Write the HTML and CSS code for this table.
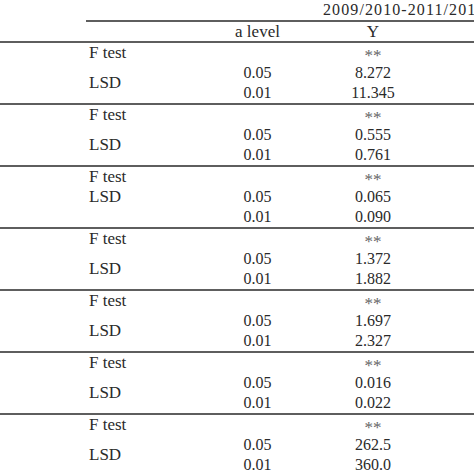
FILE: index.html
```html
<!DOCTYPE html>
<html>
<head>
<meta charset="utf-8">
<link rel="stylesheet" href="styles.css">
</head>
<body>
<div class="sheet">
  <div class="head1"><span class="period">2009/2010-2011/2012</span></div>
  <div class="head2">
    <div></div>
    <div></div>
    <div class="c3 lbl">a level</div>
    <div class="c4 lbl">Y</div>
  </div>

  <div class="group">
    <div class="lab r1">F test</div>
    <div class="c4 r1 star">**</div>
    <div class="lab r23">LSD</div>
    <div class="c3 r2">0.05</div><div class="c4 r2">8.272</div>
    <div class="c3 r3">0.01</div><div class="c4 r3">11.345</div>
  </div>

  <div class="group">
    <div class="lab r1">F test</div>
    <div class="c4 r1 star">**</div>
    <div class="lab r23">LSD</div>
    <div class="c3 r2">0.05</div><div class="c4 r2">0.555</div>
    <div class="c3 r3">0.01</div><div class="c4 r3">0.761</div>
  </div>

  <div class="group">
    <div class="lab r1">F test</div>
    <div class="c4 r1 star">**</div>
    <div class="lab r2">LSD</div>
    <div class="c3 r2">0.05</div><div class="c4 r2">0.065</div>
    <div class="c3 r3">0.01</div><div class="c4 r3">0.090</div>
  </div>

  <div class="group">
    <div class="lab r1">F test</div>
    <div class="c4 r1 star">**</div>
    <div class="lab r23">LSD</div>
    <div class="c3 r2">0.05</div><div class="c4 r2">1.372</div>
    <div class="c3 r3">0.01</div><div class="c4 r3">1.882</div>
  </div>

  <div class="group">
    <div class="lab r1">F test</div>
    <div class="c4 r1 star">**</div>
    <div class="lab r23">LSD</div>
    <div class="c3 r2">0.05</div><div class="c4 r2">1.697</div>
    <div class="c3 r3">0.01</div><div class="c4 r3">2.327</div>
  </div>

  <div class="group">
    <div class="lab r1">F test</div>
    <div class="c4 r1 star">**</div>
    <div class="lab r23">LSD</div>
    <div class="c3 r2">0.05</div><div class="c4 r2">0.016</div>
    <div class="c3 r3">0.01</div><div class="c4 r3">0.022</div>
  </div>

  <div class="group last">
    <div class="lab r1">F test</div>
    <div class="c4 r1 star">**</div>
    <div class="lab r23">LSD</div>
    <div class="c3 r2">0.05</div><div class="c4 r2">262.5</div>
    <div class="c3 r3">0.01</div><div class="c4 r3">360.0</div>
  </div>
</div>
</body>
</html>
```

FILE: styles.css
```css
html, body {
  margin: 0;
  padding: 0;
  background: #ffffff;
}

.sheet {
  width: 474px;
  height: 474px;
  overflow: hidden;
  font-family: "Liberation Serif", "Times New Roman", serif;
  color: #2a2a2a;
  font-size: 16px;
}

.head1 {
  margin-left: 86px;
  height: 20px;
  border-bottom: 2px solid #5e5e5e;
  white-space: nowrap;
  overflow: hidden;
  line-height: 20px;
  padding-left: 237px;
  font-size: 16px;
  letter-spacing: 1.1px;
}

.head2 {
  height: 19px;
  border-bottom: 2px solid #5e5e5e;
  display: grid;
  grid-template-columns: 86px 143px 57px 174px 1fr;
  line-height: 19px;
}

.group {
  height: 60px;
  border-bottom: 2px solid #5e5e5e;
  display: grid;
  grid-template-columns: 86px 143px 57px 174px 1fr;
  grid-template-rows: 20px 20px 20px;
  line-height: 20px;
}

.group.last {
  border-bottom: none;
}

.lab {
  grid-column: 2;
  padding-left: 3px;
  font-size: 17px;
  display: flex;
  align-items: center;
}

.lbl {
  font-size: 17px;
}

.c3 {
  grid-column: 3;
  text-align: center;
  white-space: nowrap;
}

.c4 {
  grid-column: 4;
  text-align: center;
  white-space: nowrap;
}

.r1 { grid-row: 1; }
.r2 { grid-row: 2; }
.r3 { grid-row: 3; }
.r23 { grid-row: 2 / span 2; }

.star {
  font-size: 17px;
  color: #666;
  letter-spacing: 0;
  padding-top: 3px;
  line-height: 20px;
}
```
